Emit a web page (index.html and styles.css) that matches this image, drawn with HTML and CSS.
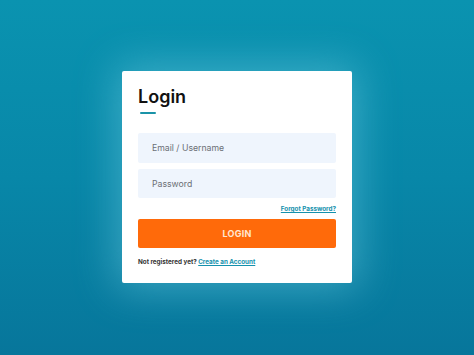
FILE: index.html
```html
<!DOCTYPE html>
<html>
<head>
<meta charset="utf-8">
<link rel="stylesheet" href="styles.css">
</head>
<body>
<main class="stage">
  <section class="card">
    <h1 class="title">Login</h1>
    <div class="title-bar"></div>
    <div class="field">Email / Username</div>
    <div class="field field-pw">Password</div>
    <div class="forgot-row"><a class="link" href="#">Forgot Password?</a></div>
    <button class="btn">LOGIN</button>
    <p class="register">Not registered yet? <a class="link" href="#">Create an Account</a></p>
  </section>
</main>
</body>
</html>
```

FILE: styles.css
```css
html, body {
  margin: 0;
  padding: 0;
}
body {
  width: 474px;
  height: 355px;
  overflow: hidden;
  font-family: "Inter", "Open Sans", sans-serif;
  background: linear-gradient(180deg, #0a93b0 0%, #0887a8 50%, #07769b 100%);
}
.stage {
  height: 355px;
  display: flex;
  align-items: flex-start;
  justify-content: center;
  padding-top: 71px;
  box-sizing: border-box;
}
.card {
  width: 230px;
  height: 212px;
  box-sizing: border-box;
  background: #ffffff;
  border-radius: 2px;
  padding: 15px 16px 0 16px;
  box-shadow: 0 0 40px 6px rgba(120, 210, 230, 0.45);
}
.title {
  margin: 0;
  font-size: 18px;
  line-height: 22px;
  font-weight: 600;
  color: #111;
}
.title-bar {
  width: 16px;
  height: 2px;
  background: #1a93a8;
  margin: 4px 0 0 2px;
  border-radius: 1px;
}
.field {
  margin-top: 19px;
  height: 30px;
  background: #eff5fd;
  border-radius: 2px;
  display: flex;
  align-items: center;
  padding-left: 14px;
  font-size: 8.7px;
  color: #6b6f75;
}
.field-pw {
  margin-top: 6px;
  height: 29px;
}
.forgot-row {
  display: flex;
  justify-content: flex-end;
  margin-top: 6px;
  height: 10px;
  align-items: center;
}
.link {
  color: #1591ad;
  font-weight: 700;
  font-size: 6.3px;
  text-decoration: underline;
}
.btn {
  margin-top: 5px;
  width: 100%;
  height: 29px;
  border: 0;
  border-radius: 2px;
  background: #ff6a0a;
  color: #ffe6d0;
  font-family: inherit;
  font-weight: 700;
  font-size: 9px;
  letter-spacing: 0.2px;
  display: block;
}
.register {
  margin: 10px 0 0 0;
  font-size: 6.3px;
  line-height: 9px;
  font-weight: 700;
  color: #333;
}
```
